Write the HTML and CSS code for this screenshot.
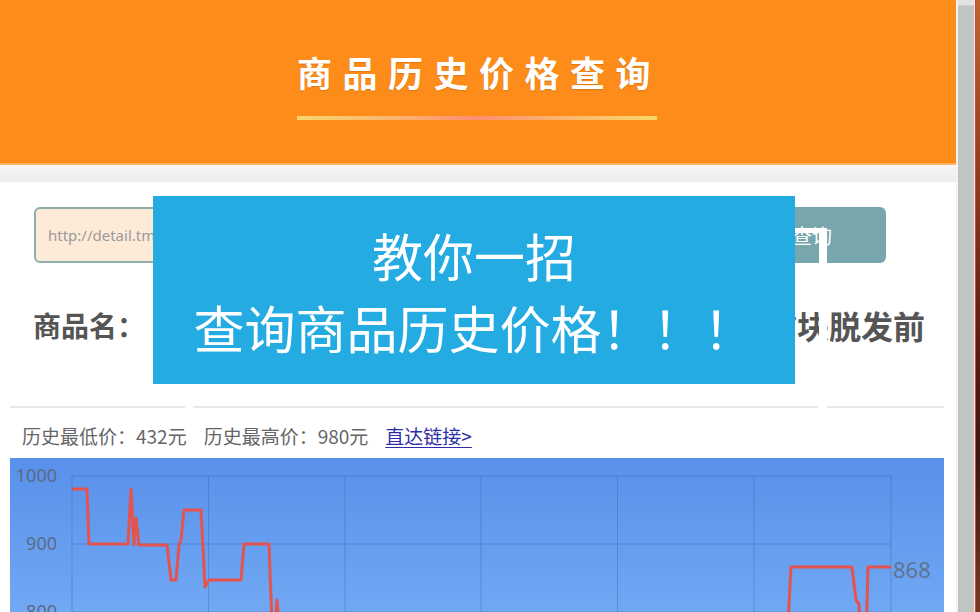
FILE: index.html
```html
<!DOCTYPE html>
<html lang="zh-CN">
<head>
<meta charset="utf-8">
<title>商品历史价格查询</title>
<link rel="stylesheet" href="styles.css">
</head>
<body>
<div class="window">
  <div class="page">
    <header class="hero">
      <h1 class="title">商品历史价格查询</h1>
      <div class="title-bar"></div>
    </header>
    <div class="band"></div>
    <section class="content">
      <div class="search">
        <div class="url">http://detail.tmall.com/item.htm?id=563847291055</div>
        <button class="query">查询</button>
      </div>
      <div class="name-row">
        <span class="label">商品名：</span>
        <span class="name">生姜洗发水控油去屑止痒蓬松男女士防块脱发前</span>
      </div>
      <div class="rule"><span class="seg seg-a"></span><span class="seg seg-b"></span><span class="seg seg-c"></span></div>
      <div class="stats">
        <span class="stat">历史最低价：432元</span>
        <span class="stat">历史最高价：980元</span>
        <a class="direct" href="#">直达链接&gt;</a>
      </div>
      <div class="chart">
        <svg class="plot" width="934" height="200" viewBox="0 0 934 200">
          <g class="grid">
            <line x1="62" y1="18" x2="881" y2="18"/>
            <line x1="62" y1="86" x2="881" y2="86"/>
            <line x1="62" y1="154" x2="881" y2="154"/>
            <line x1="62" y1="18" x2="62" y2="200"/>
            <line x1="198.5" y1="18" x2="198.5" y2="200"/>
            <line x1="335" y1="18" x2="335" y2="200"/>
            <line x1="471" y1="18" x2="471" y2="200"/>
            <line x1="607.5" y1="18" x2="607.5" y2="200"/>
            <line x1="744" y1="18" x2="744" y2="200"/>
            <line x1="881" y1="18" x2="881" y2="200"/>
          </g>
          <g class="axis">
            <text x="47" y="24">1000</text>
            <text x="47" y="92">900</text>
            <text x="47" y="160">800</text>
          </g>
          <polyline class="price" points="62,31 77,31 79,86 118,86 121,31 124,87 126,60 129,87 157,87 161,122 166,122 169,87 171,82 174,52 191,52 195,129 199,122 231,122 234,86 259,86 262,167 265,167 267,142 269,167 272,222 775,222 781,109 842,109 846,142 849,146 852,222 855,222 858,109 881,109"/>
          <text class="last" x="883" y="120">868</text>
        </svg>
      </div>
    </section>
  </div>
  <div class="scrollbar">
    <span class="sb-gap"></span>
    <span class="sb-thumb"></span>
    <span class="sb-gap2"></span>
    <span class="sb-edge"></span>
    <span class="sb-outside"></span>
  </div>
</div>
<div class="promo">
  <p class="promo-line">教你一招</p>
  <p class="promo-line">查询商品历史价格！！！</p>
</div>
<div class="glitch glitch-h"></div>
<div class="glitch glitch-v"></div>
<div class="glitch glitch-v2"></div>
</body>
</html>
```
FILE: styles.css
```css
html, body {
  margin: 0;
  padding: 0;
  width: 980px;
  height: 612px;
  overflow: hidden;
  background: #ffffff;
  font-family: "Noto Sans", "Noto Sans CJK SC", sans-serif;
}

.window {
  display: flex;
  height: 612px;
}

.page {
  width: 956px;
  flex: none;
  overflow: hidden;
  background: #ffffff;
}

/* header */
.hero {
  height: 108px;
  padding-top: 55px;
  background: #fd8c1a;
  border-bottom: 2px solid #ffb25f;
  display: flex;
  flex-direction: column;
  align-items: center;
}

.title {
  margin: 0 0 0 2px;
  font-family: "Noto Sans CJK SC", sans-serif;
  font-size: 35px;
  line-height: 34px;
  font-weight: 700;
  letter-spacing: 10.5px;
  color: #ffffff;
  text-shadow: 0 1px 1px rgba(120, 60, 0, 0.25);
}

.title-bar {
  width: 360px;
  height: 4px;
  margin: 27px 3px 0 0;
  background: linear-gradient(90deg, #f6d86c 0%, #fcb070 30%, #ff8d72 50%, #fcb070 70%, #f8d86b 100%);
}

.band {
  height: 17px;
  background: linear-gradient(180deg, #f6f6f6, #ededed);
}

/* content */
.content {
  padding: 0 12px 0 10px;
}

.search {
  display: flex;
  align-items: stretch;
  margin: 25px 0 0 24px;
  width: 852px;
  height: 56px;
  gap: 10px;
}

.url {
  flex: 1;
  box-sizing: border-box;
  border: 2px solid #8eaeae;
  border-radius: 6px;
  background: #fdebd7;
  padding: 0 12px;
  display: flex;
  align-items: center;
  font-size: 15px;
  color: #9a9a9a;
  white-space: nowrap;
  overflow: hidden;
}

.query {
  width: 148px;
  border: none;
  border-radius: 6px;
  background: #78a6ad;
  color: #ffffff;
  font-family: "Noto Sans CJK SC", sans-serif;
  font-size: 20px;
  padding: 0;
}

.name-row {
  display: flex;
  align-items: center;
  height: 40px;
  margin: 42px 19px 0 23px;
  color: #555555;
  font-family: "Noto Sans CJK SC", sans-serif;
  font-weight: 700;
}

.label {
  font-size: 28px;
  flex: none;
}

.name {
  flex: 1;
  font-size: 32px;
  text-align: right;
  white-space: nowrap;
  overflow: hidden;
}

.rule {
  display: flex;
  margin-top: 61px;
  height: 2px;
  gap: 8px;
}

.seg {
  height: 2px;
  background: #e7e7e7;
}

.seg-a { width: 175px; }
.seg-b { width: 625px; }
.seg-c { flex: 1; }

.stats {
  display: flex;
  align-items: center;
  height: 24px;
  margin: 15px 0 0 12px;
  font-family: "Noto Sans CJK SC", sans-serif;
  font-size: 19px;
  color: #666666;
  gap: 17px;
}

.direct {
  color: #2d2fa8;
  text-decoration: underline;
  text-underline-offset: 3px;
}

.chart {
  margin-top: 11px;
  height: 200px;
  background: linear-gradient(180deg, #5990ea 0%, #6ea6f3 70%, #7ab2f6 100%);
}

.plot {
  display: block;
}

.grid line {
  stroke: rgba(55, 85, 150, 0.32);
  stroke-width: 1;
}

.axis text {
  font-family: "Noto Sans", sans-serif;
  font-size: 18px;
  fill: #5a6b86;
  text-anchor: end;
}

.price {
  fill: none;
  stroke: #e5534f;
  stroke-width: 3;
  stroke-linejoin: round;
}

.last {
  font-family: "Noto Sans", sans-serif;
  font-size: 22px;
  fill: #61738e;
}

/* fake scrollbar / window edge */
.scrollbar {
  flex: 1;
  display: flex;
}

.sb-gap { width: 2px; background: #f2f2f2; }
.sb-thumb {
  width: 16px;
  background: linear-gradient(180deg, #e2e2e2 0, #e2e2e2 5px, #c1c5c1 6px, #c1c5c1 100%);
}
.sb-gap2 { width: 1px; background: #ececec; }
.sb-edge { width: 1px; background: #d8472f; }
.sb-outside {
  flex: 1;
  background: linear-gradient(180deg, #c0642e 0%, #98401f 25%, #5e1c12 55%, #3c1610 75%, #7a3a22 100%);
}

/* video overlay */
.promo {
  position: absolute;
  left: 153px;
  top: 196px;
  width: 642px;
  height: 188px;
  box-sizing: border-box;
  padding-top: 23px;
  background: #23abe2;
  color: #ffffff;
  text-align: center;
  font-family: "Noto Sans CJK SC", sans-serif;
  font-size: 51px;
  line-height: 72px;
}

.promo-line {
  margin: 0;
}

.glitch {
  position: absolute;
  background: #ffffff;
}

.glitch-h { left: 795px; top: 228px; width: 32px; height: 5px; }
.glitch-v { left: 819px; top: 228px; width: 8px; height: 182px; }
.glitch-v2 { left: 185px; top: 384px; width: 8px; height: 26px; }
```
